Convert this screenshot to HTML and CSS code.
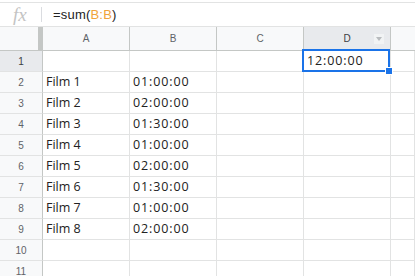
FILE: index.html
```html
<!DOCTYPE html>
<html>

<head>
	<title>
		Sheet
	</title>

	<link rel="stylesheet" href="styles.css">

</head>

<body>
	<div id="formula">
		<div class="fx">fx</div>
		<div class="input">=sum(<span class="ref">B:B</span>)</div>
	</div>

	<div id="sheet">
		<div class="corner"></div>
		<div class="colhead">A</div>
		<div class="colhead">B</div>
		<div class="colhead">C</div>
		<div class="colhead active">D<span class="filter"></span></div>
		<div class="colhead last"></div>
	</div>

	<div id="selection"><div class="handle"></div></div>

	<script type="text/javascript">

		var rows = [
			["", "", "", "12:00:00"],
			["Film 1", "01:00:00"],
			["Film 2", "02:00:00"],
			["Film 3", "01:30:00"],
			["Film 4", "01:00:00"],
			["Film 5", "02:00:00"],
			["Film 6", "01:30:00"],
			["Film 7", "01:00:00"],
			["Film 8", "02:00:00"],
			[],
			[]
		]

		function drawRows() {
			var content = "";
			for (var idx = 0; idx < rows.length; idx++) {
				var cls = idx == 0 ? "rowhead active" : "rowhead";
				content += "<div class='" + cls + "'>" + (idx + 1) + "</div>";
				for (var col = 0; col < 5; col++) {
					var text = rows[idx][col] || "";
					var cellCls = text.indexOf(":") > -1 ? "cell time" : "cell";
					content += "<div class='" + cellCls + "'>" + text + "</div>";
				}
			}
			document.getElementById("sheet").innerHTML += content;
		}

		drawRows();

	</script>
</body>

</html>
```
FILE: styles.css
```css
body {
	margin: 0;
	width: 415px;
	height: 276px;
	overflow: hidden;
	background: #ffffff;
	font-family: "Liberation Sans", Arial, sans-serif;
	position: relative;
}

#formula {
	margin-top: 2px;
	height: 23px;
	border-top: 1px solid #e2e3e3;
	border-bottom: 1px solid #e2e3e3;
	display: flex;
	align-items: center;
}

.fx {
	width: 42px;
	box-sizing: border-box;
	padding-left: 13px;
	font-family: "Liberation Serif", serif;
	font-style: italic;
	font-size: 19px;
	color: #c4c4c4;
	border-right: 1px solid #dadce0;
	height: 15px;
	line-height: 15px;
}

.input {
	padding-left: 11px;
	font-size: 13px;
	color: #222222;
	letter-spacing: 0.2px;
}

.ref {
	color: #f0a43a;
}

#sheet {
	display: grid;
	grid-template-columns: 43px 87px 87px 87px 87px 1fr;
	grid-auto-rows: 21px;
	grid-template-rows: 24px;
}

#sheet > div {
	box-sizing: border-box;
	border-right: 1px solid #e2e3e3;
	border-bottom: 1px solid #e2e3e3;
}

.corner {
	background: #f8f9fa;
	border-right: 5px solid #c4c7c5 !important;
	border-bottom: 1px solid #c4c7c5 !important;
}

.colhead {
	background: #f8f9fa;
	font-size: 10px;
	color: #5f6368;
	display: flex;
	align-items: center;
	justify-content: center;
	position: relative;
	border-right: 1px solid #c4c7c5 !important;
	border-bottom: 1px solid #c4c7c5 !important;
}

.colhead.last {
	border-right: none !important;
}

.colhead.active,
.rowhead.active {
	background: #e8eaed;
	color: #3c4043;
}

.filter {
	position: absolute;
	right: 6px;
	top: 7px;
	width: 10px;
	height: 10px;
	background: #f1f3f4;
}

.filter::after {
	content: "";
	position: absolute;
	left: 2px;
	top: 3px;
	border-left: 3px solid transparent;
	border-right: 3px solid transparent;
	border-top: 4px solid #b8bbbe;
}

.rowhead {
	background: #f8f9fa;
	font-size: 10px;
	color: #5f6368;
	display: flex;
	align-items: center;
	justify-content: center;
	border-right: 1px solid #c4c7c5 !important;
}

.cell {
	font-family: "Open Sans", sans-serif;
	font-size: 12.5px;
	color: #222222;
	padding-left: 3px;
	line-height: 20px;
	white-space: nowrap;
}

.cell.time {
	letter-spacing: 0.9px;
}

#selection {
	position: absolute;
	left: 302px;
	top: 49px;
	width: 88px;
	height: 23px;
	box-sizing: border-box;
	border: 2px solid #1a73e8;
}

.handle {
	position: absolute;
	right: -5px;
	bottom: -5px;
	width: 6px;
	height: 6px;
	background: #1a73e8;
	border: 1px solid #ffffff;
}
```
